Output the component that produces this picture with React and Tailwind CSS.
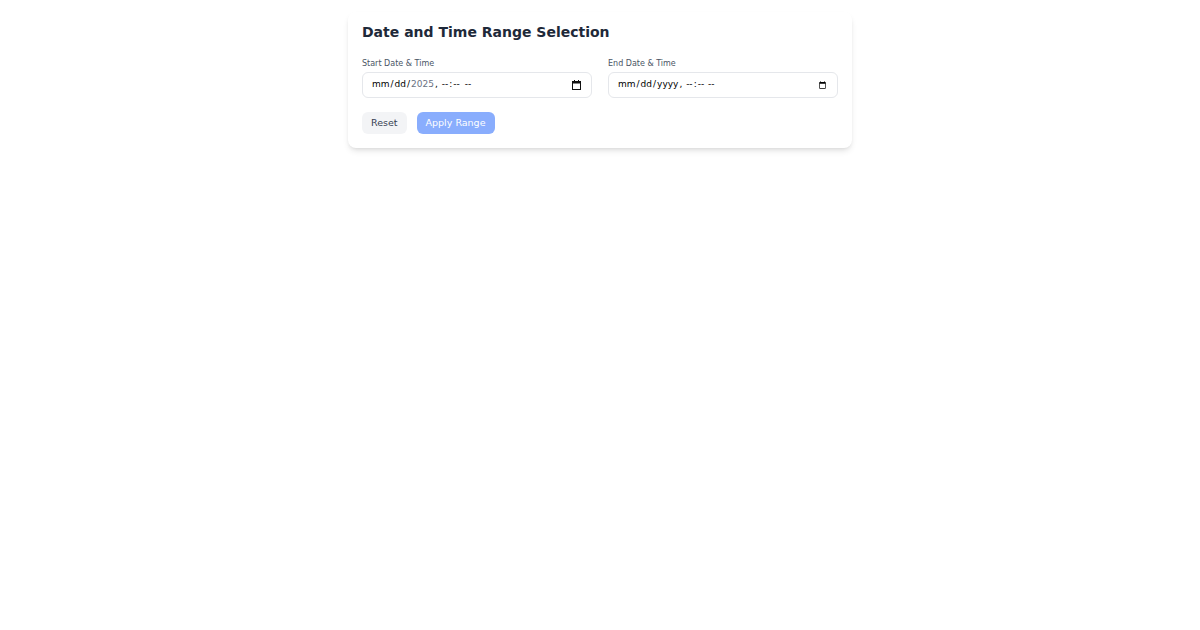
import React from 'react';

const CalendarGlyph = () => (
  <svg width="9" height="10" viewBox="0 0 9 10" className="shrink-0">
    <rect x="0.5" y="1.5" width="8" height="8" fill="none" stroke="#111" strokeWidth="1" />
    <rect x="0.5" y="1.5" width="8" height="2" fill="#111" />
    <rect x="2" y="0" width="1" height="2" fill="#111" />
    <rect x="6" y="0" width="1" height="2" fill="#111" />
  </svg>
);

const Field = ({ children, muted }) => (
  <span className={muted ? 'px-[1px] text-gray-500' : 'px-[1px]'}>{children}</span>
);

const App = () => {
  return (
    <div className="min-h-screen bg-white" style={{ fontFamily: '"DejaVu Sans", sans-serif' }}>
      <div className="mx-auto mt-3 w-[504px] rounded-lg bg-white px-3.5 pt-2 pb-3.5 shadow-md">
        <h2 className="mb-[14px] text-[14px] font-bold leading-6 text-gray-800">Date and Time Range Selection</h2>

        <div className="grid grid-cols-2 gap-4">
          <div>
            <label className="mb-0.5 block text-[8px] text-gray-600">Start Date &amp; Time</label>
            <div className="flex h-[26px] items-center justify-between rounded-md border border-gray-200 pl-[8px] pr-[10px] text-[9px] text-black">
              <span className="whitespace-pre">
                <Field>mm</Field>/<Field>dd</Field>/<Field muted>2025</Field>, <Field>--</Field>:<Field>--</Field> <Field>--</Field>
              </span>
              <CalendarGlyph />
            </div>
          </div>
          <div>
            <label className="mb-0.5 block text-[8px] text-gray-600">End Date &amp; Time</label>
            <input
              type="datetime-local"
              className="block h-[26px] w-full rounded-md border border-gray-200 px-2 text-[9px] text-black"
            />
          </div>
        </div>

        <div className="mt-3.5 flex gap-2.5">
          <button className="h-[22px] rounded-md bg-gray-100 px-[9px] text-[9.5px] text-gray-700">Reset</button>
          <button className="h-[22px] rounded-md bg-blue-600 px-[9px] text-[9.5px] text-white opacity-50">Apply Range</button>
        </div>
      </div>
    </div>
  );
};

export default App;
